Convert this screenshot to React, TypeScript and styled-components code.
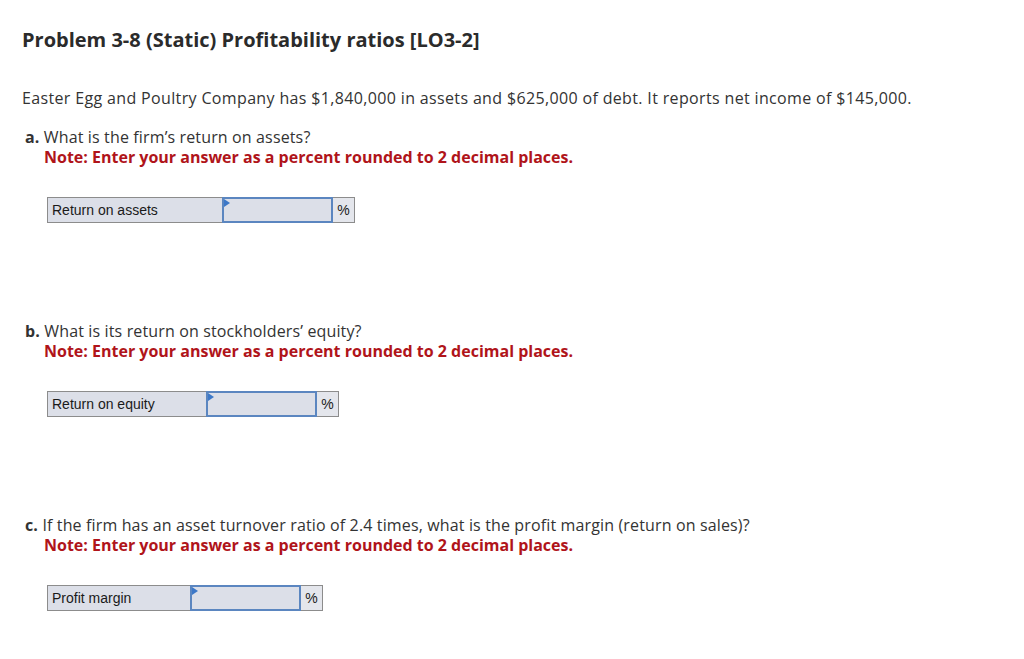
import React from "react";
import styled, { createGlobalStyle } from "styled-components";

const Global = createGlobalStyle`
  html, body { margin: 0; padding: 0; background: #ffffff; }
  body { font-family: "Open Sans", "Liberation Sans", sans-serif; color: #333333; }
`;

const Page = styled.div`
  padding: 26px 0 0 22px;
  width: 1002px;
`;

const Title = styled.h1`
  margin: 0;
  font-size: 20px;
  line-height: 28px;
  font-weight: 700;
  color: #2b2b2b;
`;

const Intro = styled.p`
  margin: 34px 0 0 0;
  font-size: 16px;
  line-height: 20px;
  letter-spacing: 0.35px;
  color: #333;
`;

const Section = styled.div<{ $top: number }>`
  margin-top: ${(p) => p.$top}px;
  padding-left: 3px;
`;

const Question = styled.div`
  font-size: 16px;
  line-height: 20px;
  letter-spacing: 0.14px;
  color: #333;
`;

const Letter = styled.span`
  font-weight: 700;
`;

const Note = styled.div`
  padding-left: 19px;
  font-size: 16px;
  line-height: 20px;
  font-weight: 700;
  color: #b0141a;
`;

const Table = styled.div`
  margin-top: 30px;
  margin-left: 22px;
  display: flex;
  height: 26px;
  width: max-content;
`;

const LabelCell = styled.div<{ $w: number }>`
  box-sizing: border-box;
  width: ${(p) => p.$w}px;
  height: 26px;
  border: 1px solid #8c8c8c;
  border-right: none;
  background: #dcdfe8;
  font-family: "Liberation Sans", Arial, sans-serif;
  font-size: 14px;
  color: #1a1a1a;
  display: flex;
  align-items: center;
  padding-left: 4px;
`;

const InputCell = styled.div`
  position: relative;
  box-sizing: border-box;
  width: 111px;
  height: 26px;
  border: 2px solid #5b86c0;
  background: #dcdfe8;
`;

const Marker = styled.span`
  position: absolute;
  left: 0;
  top: 0;
  width: 0;
  height: 0;
  border-top: 4px solid transparent;
  border-bottom: 4px solid transparent;
  border-left: 6px solid #3d78c8;
`;

const UnitCell = styled.div`
  box-sizing: border-box;
  width: 22px;
  height: 26px;
  border: 1px solid #8c8c8c;
  border-left: none;
  background: #e4e6ec;
  font-family: "Liberation Sans", Arial, sans-serif;
  font-size: 14px;
  color: #1a1a1a;
  display: flex;
  align-items: center;
  justify-content: center;
`;

const items = [
  { letter: "a.", q: "What is the firm’s return on assets?", label: "Return on assets", w: 175, top: 19 },
  { letter: "b.", q: "What is its return on stockholders’ equity?", label: "Return on equity", w: 159, top: 98 },
  { letter: "c.", q: "If the firm has an asset turnover ratio of 2.4 times, what is the profit margin (return on sales)?", label: "Profit margin", w: 143, top: 98 },
];

export default function App() {
  return (
    <>
      <Global />
      <Page>
        <Title>Problem 3-8 (Static) Profitability ratios [LO3-2]</Title>
        <Intro>
          Easter Egg and Poultry Company has $1,840,000 in assets and $625,000 of debt. It reports net income of $145,000.
        </Intro>
        {items.map((it) => (
          <Section key={it.letter} $top={it.top}>
            <Question>
              <Letter>{it.letter}</Letter> {it.q}
            </Question>
            <Note>Note: Enter your answer as a percent rounded to 2 decimal places.</Note>
            <Table>
              <LabelCell $w={it.w}>{it.label}</LabelCell>
              <InputCell>
                <Marker />
              </InputCell>
              <UnitCell>%</UnitCell>
            </Table>
          </Section>
        ))}
      </Page>
    </>
  );
}
